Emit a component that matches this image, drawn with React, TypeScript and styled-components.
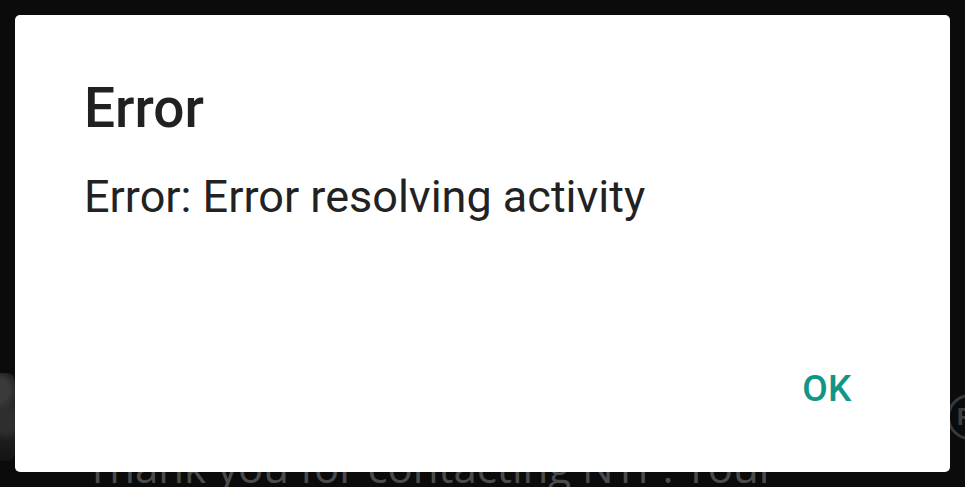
import styled, { createGlobalStyle } from 'styled-components'

const GlobalStyle = createGlobalStyle`
  html, body {
    margin: 0;
    padding: 0;
    background: #0b0b0b;
    overflow: hidden;
  }
`;

function App() {
  return (
    <Screen>
      <GlobalStyle />
      <Behind>
        <GhostLine $top>Account number: 2100498</GhostLine>
        <MessageRow>
          <Avatar />
          <Badge>R</Badge>
        </MessageRow>
        <GhostLine>Thank you for contacting NYP. Your</GhostLine>
      </Behind>
      <Scrim>
        <Dialog role="alertdialog">
          <Title>Error</Title>
          <Message>Error: Error resolving activity</Message>
          <Actions>
            <TextButton>OK</TextButton>
          </Actions>
        </Dialog>
      </Scrim>
    </Screen>
  )
}

export default App

const Screen = styled.div`
  position: relative;
  width: 965px;
  height: 487px;
  overflow: hidden;
  background: #0b0b0b;
`;

const Behind = styled.div`
  display: flex;
  flex-direction: column;
  justify-content: space-between;
  height: 100%;
`;

const GhostLine = styled.div<{ $top?: boolean }>`
  font-family: 'Open Sans', 'Noto Sans', sans-serif;
  font-size: 42px;
  line-height: 42px;
  color: #4b4b4b;
  white-space: nowrap;
  padding-left: ${p => (p.$top ? '80px' : '86px')};
  margin-top: ${p => (p.$top ? '-37px' : '0')};
  margin-bottom: ${p => (p.$top ? '0' : '-1px')};
`;

const MessageRow = styled.div`
  display: flex;
  align-items: center;
  justify-content: space-between;
  margin-top: auto;
  margin-bottom: -15px;
`;

const Avatar = styled.div`
  width: 90px;
  height: 88px;
  margin-left: -75px;
  border-radius: 8px;
  background:
    radial-gradient(circle at 80% 20%, #3a3a3a 0 12px, transparent 22px),
    radial-gradient(circle at 90% 55%, #2e2e2e 0 10px, transparent 20px),
    linear-gradient(180deg, #1c1c1c, #262626 45%, #141414);
`;

const Badge = styled.div`
  box-sizing: border-box;
  width: 46px;
  height: 46px;
  margin-right: -28px;
  border: 3px solid #383838;
  border-radius: 50%;
  display: flex;
  align-items: center;
  padding-left: 7px;
  font-family: 'Roboto', sans-serif;
  font-weight: 700;
  font-size: 24px;
  color: #3e3e3e;
`;

const Scrim = styled.div`
  position: absolute;
  inset: 0;
  padding: 15px;
  display: flex;
`;

const Dialog = styled.div`
  flex: 1;
  display: flex;
  flex-direction: column;
  background: #ffffff;
  border-radius: 5px;
  padding: 66px 0 65px 69px;
  font-family: 'Roboto', sans-serif;
  color: #212121;
`;

const Title = styled.h1`
  margin: 0;
  font-size: 55px;
  line-height: 55px;
  font-weight: 500;
  letter-spacing: 0;
`;

const Message = styled.p`
  margin: 38px 0 0;
  font-size: 45px;
  line-height: 45px;
  font-weight: 400;
  color: #222222;
`;

const Actions = styled.div`
  margin-top: auto;
  display: flex;
  justify-content: flex-end;
  padding-right: 98px;
`;

const TextButton = styled.button`
  border: none;
  background: none;
  padding: 0;
  font-family: 'Roboto', sans-serif;
  font-size: 37px;
  line-height: 37px;
  font-weight: 500;
  letter-spacing: 0.5px;
  color: #109587;
  cursor: pointer;
`;
